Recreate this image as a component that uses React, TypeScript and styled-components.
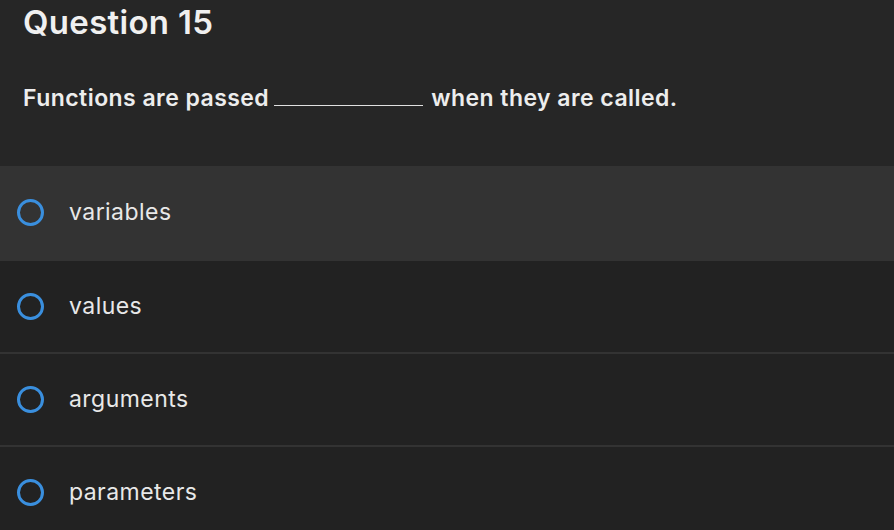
import React, { useState } from 'react';
import styled, { createGlobalStyle } from 'styled-components';

const GlobalStyle = createGlobalStyle`
    html, body {
        margin: 0;
        padding: 0;
        background: #222222;
    }
    body {
        font-family: 'Inter', 'Noto Sans', sans-serif;
    }
`;

const Page = styled.div`
    width: 894px;
    height: 530px;
    overflow: hidden;
    background: #222222;
    color: #ededed;
`;

const Header = styled.div`
    height: 166px;
    background: #262626;
    padding: 0 23px;
    box-sizing: border-box;
`;

const Title = styled.h1`
    margin: 0;
    padding-top: 2px;
    font-size: 33px;
    font-weight: 600;
    line-height: 40px;
    letter-spacing: 0.3px;
    color: #f0f0f0;
`;

const Prompt = styled.p`
    margin: 42px 0 0;
    font-size: 23px;
    font-weight: 600;
    line-height: 28px;
    letter-spacing: 0.45px;
    color: #ededed;
`;

const Blank = styled.span`
    display: inline-block;
    width: 149px;
    height: 20px;
    margin: 0 8px 0 5px;
    border-bottom: 1.5px solid #e0e0e0;
    vertical-align: baseline;
`;

const OptionList = styled.ul`
    list-style: none;
    margin: 0;
    padding: 0;
`;

const Option = styled.li<{ $active: boolean; $first: boolean }>`
    display: flex;
    align-items: center;
    gap: 25px;
    height: ${(p) => (p.$first ? 93 : 91)}px;
    padding: 0 17px;
    box-sizing: content-box;
    background: ${(p) => (p.$active ? '#333333' : '#222222')};
    border-bottom: 2px solid #333333;
    cursor: pointer;
`;

const Radio = styled.span`
    width: 21px;
    height: 21px;
    border: 3px solid #3a8fde;
    border-radius: 50%;
    flex-shrink: 0;
`;

const Label = styled.span`
    font-size: 23px;
    font-weight: 400;
    letter-spacing: 0.45px;
    color: #e8e8e8;
    margin-top: -2px;
`;

const choices = ['variables', 'values', 'arguments', 'parameters'];

export default function App() {
    const [hover, setHover] = useState<number>(0);

    return (
        <Page>
            <GlobalStyle />
            <Header>
                <Title>Question 15</Title>
                <Prompt>
                    Functions are passed<Blank />when they are called.
                </Prompt>
            </Header>
            <OptionList>
                {choices.map((c, i) => (
                    <Option
                        key={c}
                        $first={i === 0}
                        $active={hover === i}
                        onMouseEnter={() => setHover(i)}
                    >
                        <Radio />
                        <Label>{c}</Label>
                    </Option>
                ))}
            </OptionList>
        </Page>
    );
}
